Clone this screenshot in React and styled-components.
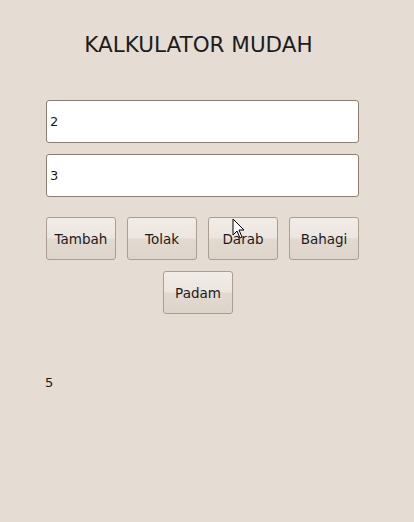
import React, { useState } from 'react'
import styled, { createGlobalStyle } from 'styled-components'

const GlobalStyle = createGlobalStyle`
  html, body {
    margin: 0;
    padding: 0;
    background: #e5ddd4;
  }
  body {
    font-family: 'DejaVu Sans', 'Liberation Sans', sans-serif;
    color: #1a1a1a;
  }
`

const Page = styled.div`
  position: relative;
  width: 414px;
  height: 522px;
  padding: 33px 0 0 46px;
  box-sizing: border-box;
`

const Panel = styled.div`
  width: 313px;
  display: flex;
  flex-direction: column;
`

const Title = styled.h1`
  margin: 0 0 43px 0;
  font-size: 21.5px;
  font-weight: normal;
  text-align: center;
  color: #1c1c1c;
  line-height: 24px;
  padding-right: 8px;
`

const Field = styled.input`
  box-sizing: border-box;
  width: 313px;
  height: 43px;
  margin-bottom: 11px;
  padding: 0 3px;
  border: 1px solid #8c7e70;
  border-radius: 3px;
  background: #ffffff;
  font-family: 'DejaVu Sans', sans-serif;
  font-size: 13px;
  color: #1a1a1a;
  outline: none;
`

const ButtonRow = styled.div`
  display: flex;
  justify-content: ${p => (p.$center ? 'center' : 'space-between')};
  margin-top: ${p => p.$top || 0}px;
  padding-right: ${p => (p.$center ? 9 : 0)}px;
`

const Btn = styled.button`
  box-sizing: border-box;
  width: 70px;
  height: 43px;
  border: 1px solid #aa9e93;
  border-radius: 3px;
  background: linear-gradient(to bottom, #f1ece7 0%, #ece6df 48%, #e2d9d0 52%, #ddd4ca 100%);
  font-family: 'DejaVu Sans', sans-serif;
  font-size: 13.5px;
  color: #1c1c1c;
  padding: 0;
  cursor: default;
`

const Result = styled.div`
  margin-top: 61px;
  margin-left: -1px;
  font-size: 13px;
  color: #1a1a1a;
`

const Pointer = styled.svg`
  position: absolute;
  left: 232px;
  top: 218px;
`

export default function App() {
  const [a, setA] = useState('2')
  const [b, setB] = useState('3')
  const [result, setResult] = useState('5')

  const calc = op => {
    const x = parseFloat(a)
    const y = parseFloat(b)
    if (op === '+') setResult(String(x + y))
    if (op === '-') setResult(String(x - y))
    if (op === '*') setResult(String(x * y))
    if (op === '/') setResult(String(x / y))
  }

  return (
    <>
      <GlobalStyle />
      <Page>
        <Panel>
          <Title>KALKULATOR MUDAH</Title>
          <Field value={a} onChange={e => setA(e.target.value)} />
          <Field value={b} onChange={e => setB(e.target.value)} />
          <ButtonRow $top={9}>
            <Btn onClick={() => calc('+')}>Tambah</Btn>
            <Btn onClick={() => calc('-')}>Tolak</Btn>
            <Btn onClick={() => calc('*')}>Darab</Btn>
            <Btn onClick={() => calc('/')}>Bahagi</Btn>
          </ButtonRow>
          <ButtonRow $center $top={11}>
            <Btn onClick={() => { setA(''); setB(''); setResult('') }}>Padam</Btn>
          </ButtonRow>
          <Result>{result}</Result>
        </Panel>
        <Pointer width="14" height="22" viewBox="0 0 14 22">
          <path d="M1 1 L1 17 L5 13 L8 20 L10 19 L7 12 L12 12 Z" fill="#ffffff" stroke="#000000" strokeWidth="1" strokeLinejoin="miter" />
        </Pointer>
      </Page>
    </>
  )
}
